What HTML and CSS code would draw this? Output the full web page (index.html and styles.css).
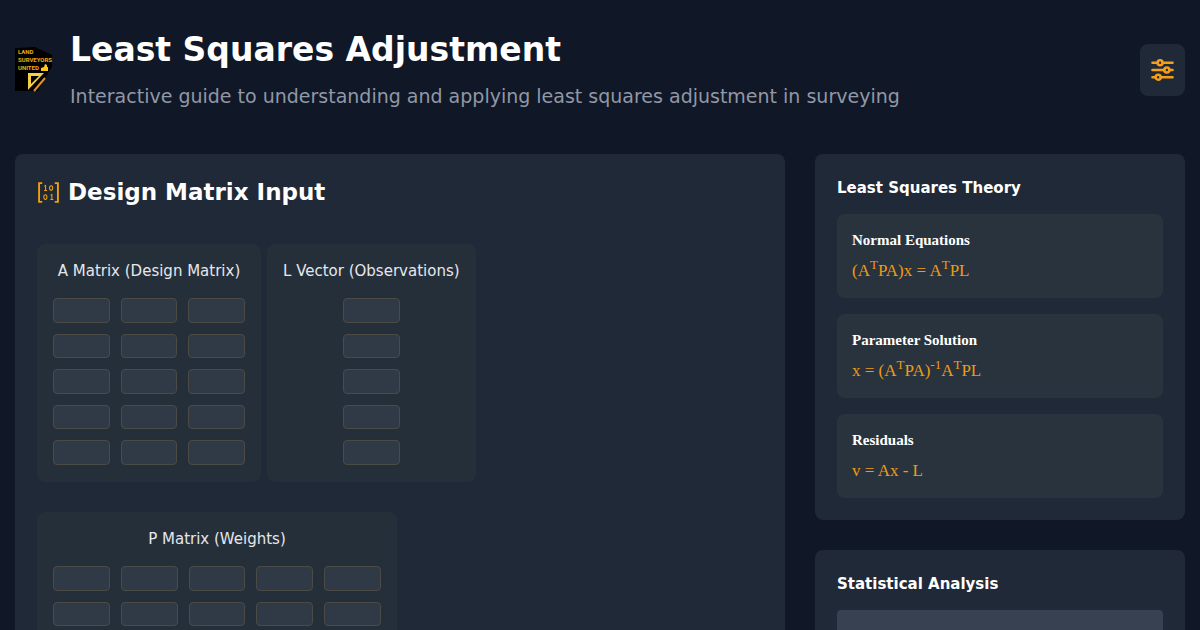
FILE: index.html
```html
<!DOCTYPE html>
<html lang="en">
<head>
<meta charset="utf-8">
<meta name="viewport" content="width=device-width, initial-scale=1">
<title>Least Squares Adjustment</title>
<link rel="stylesheet" href="styles.css">
</head>
<body>
<header class="header">
  <svg class="logo" viewBox="0 0 40 46" role="img" aria-label="Land Surveyors United">
    <path d="M0 1H3L20 0L37 8V20L33 26L23 44H0Z" fill="#000"/>
    <g class="logo-text">
      <text x="3" y="7">LAND</text>
      <text x="3" y="15">SURVEYORS</text>
      <text x="3" y="23">UNITED</text>
    </g>
    <path d="M26 21L29 20L30 17L32 18V20H33V24H26Z" fill="#ffc61a"/>
    <path d="M13 26H29L13 43ZM16 29V37L24 29Z" fill="#f6cf45" fill-rule="evenodd"/>
    <path d="M30 31L19 44" stroke="#dc932b" stroke-width="2" fill="none"/>
  </svg>
  <div class="titles">
    <h1 class="title">Least Squares Adjustment</h1>
    <p class="subtitle">Interactive guide to understanding and applying least squares adjustment in surveying</p>
  </div>
  <button class="settings" type="button" aria-label="Settings">
    <svg class="settings-icon" viewBox="0 0 24 24" fill="none" stroke="currentColor" stroke-width="2.6" stroke-linecap="round">
      <path d="M1.5 4.5H7M12 4.5H22.5M1.5 12H14M19 12H22.5M1.5 19.5H5M10 19.5H22.5"/>
      <circle cx="9.5" cy="4.5" r="2.6"/><circle cx="16.5" cy="12" r="2.6"/><circle cx="7.5" cy="19.5" r="2.6"/>
    </svg>
  </button>
</header>
<main class="layout">
  <section class="card card-main">
    <h2 class="card-title">
      <svg class="matrix-icon" viewBox="0 0 22 22" aria-hidden="true">
        <path d="M5 2H2V20H5M17 2H20V20H17" fill="none" stroke="currentColor" stroke-width="1.8"/>
        <path d="M7 5.2L8.2 4.4V9M6.8 9H9.6M13 13.8L14.2 13V17.6M12.8 17.6H15.6" fill="none" stroke="currentColor" stroke-width="1"/>
        <ellipse cx="13.5" cy="6.7" rx="1.5" ry="2.2" fill="none" stroke="currentColor" stroke-width="1"/>
        <ellipse cx="8" cy="15.4" rx="1.5" ry="2.2" fill="none" stroke="currentColor" stroke-width="1"/>
      </svg>
      Design Matrix Input
    </h2>
    <div class="matrices">
      <div class="matrix">
        <h3 class="matrix-title">A Matrix (Design Matrix)</h3>
        <div class="cells cells-3" data-name="A" data-cols="3"></div>
      </div>
      <div class="matrix">
        <h3 class="matrix-title">L Vector (Observations)</h3>
        <div class="cells cells-1" data-name="L" data-cols="1"></div>
      </div>
    </div>
    <div class="matrices">
      <div class="matrix">
        <h3 class="matrix-title">P Matrix (Weights)</h3>
        <div class="cells cells-5" data-name="P" data-cols="5"></div>
      </div>
    </div>
  </section>
  <aside class="side">
    <section class="card">
      <h3 class="side-title">Least Squares Theory</h3>
      <div class="formulas">
        <div class="formula">
          <h4 class="formula-title">Normal Equations</h4>
          <p class="equation">(A<sup>T</sup>PA)x = A<sup>T</sup>PL</p>
        </div>
        <div class="formula">
          <h4 class="formula-title">Parameter Solution</h4>
          <p class="equation">x = (A<sup>T</sup>PA)<sup>-1</sup>A<sup>T</sup>PL</p>
        </div>
        <div class="formula">
          <h4 class="formula-title">Residuals</h4>
          <p class="equation">v = Ax - L</p>
        </div>
      </div>
    </section>
    <section class="card">
      <h3 class="side-title">Statistical Analysis</h3>
      <div class="stat"></div>
    </section>
  </aside>
</main>
<script src="matrix.js"></script>
</body>
</html>
```
FILE: styles.css
```css
*, *::before, *::after { box-sizing: border-box; }
body {
  margin: 0;
  padding: 30px 15px;
  background: #101726;
  color: #fff;
  font-family: "DejaVu Sans", Verdana, sans-serif;
  font-size: 15px;
  line-height: 24px;
}
h1, h2, h3, h4, p { margin: 0; }
.header {
  display: flex;
  align-items: center;
  gap: 15px;
  margin-bottom: 44px;
}
.logo { flex: none; width: 40px; height: 46px; }
.logo-text {
  fill: #f5a812;
  font: bold 6px Roboto, "Liberation Sans", sans-serif;
}
.titles { flex: 1; min-width: 0; }
.title { font-size: 33px; line-height: 40px; font-weight: 700; }
.subtitle { margin-top: 12px; color: #9198a6; font-size: 19px; line-height: 28px; }
.settings {
  flex: none;
  display: flex;
  padding: 14px 11px;
  border: 0;
  border-radius: 8px;
  background: #1f2937;
  color: #f59e1b;
  cursor: pointer;
}
.settings-icon { width: 23px; height: 24px; }
.layout {
  display: grid;
  grid-template-columns: repeat(12, minmax(0, 1fr));
  gap: 30px;
}
.card {
  padding: 22px;
  border-radius: 8px;
  background: #1f2937;
}
.card-main { grid-column: span 8; }
.side { grid-column: span 4; display: grid; gap: 30px; align-content: start; }
.card-title {
  display: flex;
  align-items: center;
  gap: 8px;
  margin-bottom: 36px;
  font-size: 23px;
  line-height: 32px;
}
.matrix-icon { width: 23px; height: 23px; color: #f59e0b; }
.matrices { display: flex; flex-wrap: wrap; gap: 6px; margin-bottom: 30px; }
.matrix {
  padding: 15px 16px 17px;
  border-radius: 8px;
  background: #252f3a;
}
.matrix-title {
  margin-bottom: 15px;
  color: #e5e7eb;
  font-size: 15px;
  font-weight: 400;
  text-align: center;
}
.cells {
  display: grid;
  gap: 11px;
  grid-auto-rows: 1fr;
  height: 167px;
  margin: 0 auto;
}
.cells-1 { width: 57px; grid-template-columns: 1fr; }
.cells-3 { width: 192px; grid-template-columns: repeat(3, 1fr); }
.cells-5 { width: 328px; grid-template-columns: repeat(5, 1fr); }
.cell {
  width: 100%;
  min-width: 0;
  min-height: 0;
  padding: 0 4px;
  border: 1px solid #4c4a45;
  border-radius: 4px;
  background: #303a46;
  color: #fff;
  font: inherit;
  text-align: center;
}
.side-title { margin-bottom: 14px; font-size: 15px; line-height: 24px; }
.formulas { display: grid; gap: 16px; }
.formula {
  display: grid;
  gap: 7px;
  padding: 15px 15px 14px;
  border-radius: 8px;
  background: #29333e;
  font-family: "Liberation Serif", "Times New Roman", serif;
}
.formula-title { font-size: 15px; line-height: 22px; }
.equation { color: #ef9b12; font-size: 17px; line-height: 26px; }
.equation sup { font-size: 13px; line-height: 0; }
.stat { min-height: 90px; border-radius: 4px; background: #374151; }
```
FILE: matrix.js
```js
document.querySelectorAll(".cells").forEach(function (grid) {
  var cols = Number(grid.dataset.cols);
  for (var row = 1; row <= 5; row++) {
    for (var col = 1; col <= cols; col++) {
      var input = document.createElement("input");
      input.className = "cell";
      input.type = "text";
      input.setAttribute("aria-label", grid.dataset.name + " row " + row + " column " + col);
      grid.appendChild(input);
    }
  }
});
```
